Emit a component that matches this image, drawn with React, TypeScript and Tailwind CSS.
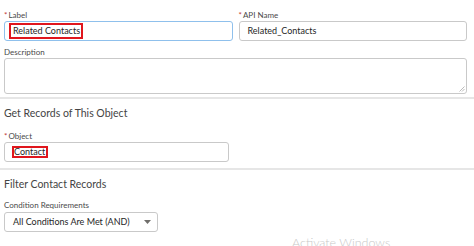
import React from "react";

const font = { fontFamily: 'Lato, "Open Sans", sans-serif' };

const FieldLabel = ({ text, required }: { text: string; required?: boolean }) => (
  <div className="text-[8px] leading-[11px] text-[#4a4a4a] whitespace-nowrap">
    {required && <span className="text-[#c23934] mr-[1px]">*</span>}
    <span>{text}</span>
  </div>
);

const Separator = () => <div className="h-[2px] bg-[#e6e6e6] ml-[-4px] mr-[-7px]" />;

export default function App() {
  return (
    <div
      className="relative w-[474px] h-[246px] overflow-hidden bg-white pl-[4px] pr-[7px] pt-[10px]"
      style={font}
    >
      {/* top fields */}
      <div className="grid grid-cols-2 gap-[6px]">
        <div>
          <FieldLabel text="Label" required />
          <div className="h-[20px] rounded-[3px] border border-[#8fc0ec] flex items-center pl-[4px]">
            <span className="border-2 border-[#e0161d] h-[16px] leading-[12px] pl-[2px] pr-[1px] text-[9px] text-[#262626] whitespace-nowrap">
              Related Contacts
            </span>
          </div>
        </div>
        <div>
          <FieldLabel text="API Name" required />
          <div className="h-[20px] rounded-[3px] border border-[#c9c9c9] flex items-center pl-[8px] text-[9px] text-[#262626]">
            Related_Contacts
          </div>
        </div>
      </div>

      <div className="mt-[6px]">
        <FieldLabel text="Description" />
        <div className="relative h-[36px] rounded-[3px] border border-[#c9c9c9]">
          <svg className="absolute right-[1px] bottom-[1px]" width="6" height="6" viewBox="0 0 6 6">
            <path d="M5.5 0.5 L0.5 5.5 M5.5 3 L3 5.5" stroke="#aaa" strokeWidth="0.8" />
          </svg>
        </div>
      </div>

      <div className="mt-[3px]">
        <Separator />
      </div>

      <div className="mt-[6px] text-[10.5px] leading-[16px] text-[#444]">Get Records of This Object</div>

      <div className="mt-[10px] w-[225px]">
        <FieldLabel text="Object" required />
        <div className="h-[20px] rounded-[3px] border border-[#c9c9c9] flex items-center pl-[7px]">
          <span className="border-2 border-[#e0161d] h-[12px] leading-[8px] pr-[1px] text-[9px] text-[#262626] whitespace-nowrap">
            Contact
          </span>
        </div>
      </div>

      <div className="mt-[6px]">
        <Separator />
      </div>

      <div className="mt-[6px] text-[10.5px] leading-[16px] text-[#444]">Filter Contact Records</div>

      <div className="mt-[8px] w-[154px]">
        <div className="text-[8px] leading-[11px] text-[#4a4a4a] whitespace-nowrap">Condition Requirements</div>
        <div className="mt-[1px] h-[20px] rounded-[3px] border border-[#c9c9c9] flex items-center justify-between pl-[8px] pr-[6px] text-[9px] text-[#262626]">
          <span className="whitespace-nowrap">All Conditions Are Met (AND)</span>
          <svg width="7" height="4" viewBox="0 0 7 4">
            <path d="M0 0 H7 L3.5 4 Z" fill="#706e6b" />
          </svg>
        </div>
      </div>

      {/* windows watermark */}
      <div className="absolute left-[292px] top-[234px] text-[12.5px] leading-[18px] font-light text-[#c8c8c8] whitespace-nowrap">
        Activate Windows
      </div>
    </div>
  );
}
